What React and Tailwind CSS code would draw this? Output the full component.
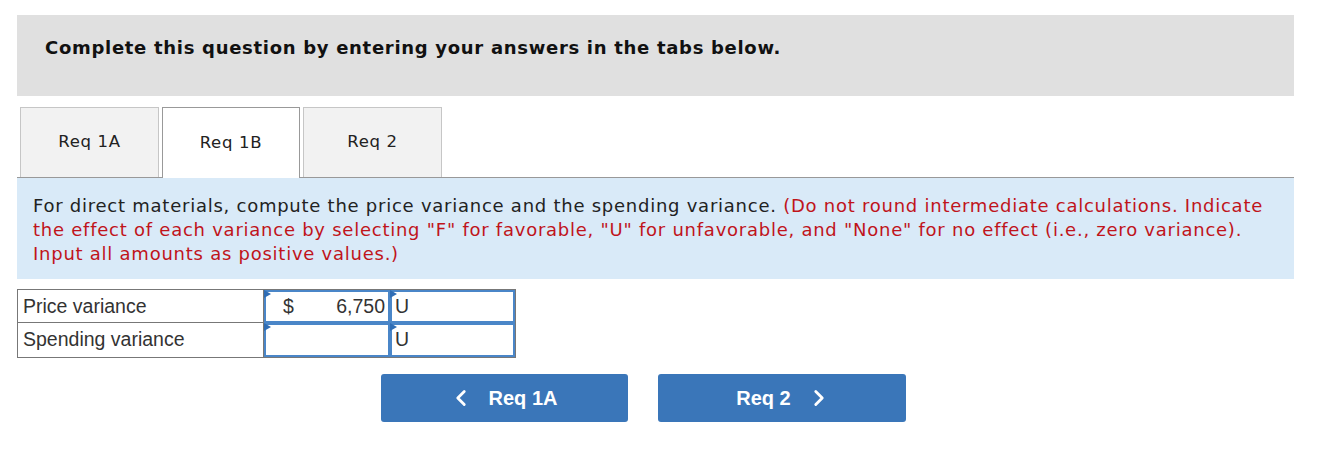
import { ChevronLeft, ChevronRight } from "lucide-react";

const verdana = { fontFamily: '"DejaVu Sans", Verdana, sans-serif' };

function Tab({ label, active }) {
  return active ? (
    <div className="w-[138px] h-[71px] -mb-px bg-white border border-b-0 border-[#999] flex items-center justify-center text-[16.5px] tracking-[0.7px] text-[#222] relative z-10">
      {label}
    </div>
  ) : (
    <div className="w-[139px] h-[70px] bg-[#f2f2f2] border border-b-0 border-[#c6c6c6] flex items-center justify-center text-[16.5px] tracking-[0.7px] text-[#222]">
      {label}
    </div>
  );
}

function Cell({ children, className = "" }) {
  return (
    <div className={"relative h-full border-2 border-[#4a86c8] flex items-center " + className}>
      <span className="absolute -top-[2px] -left-[2px] w-0 h-0 border-l-[7px] border-l-[#2f6db5] border-y-[4px] border-y-transparent" />
      {children}
    </div>
  );
}

export default function App() {
  return (
    <div className="bg-white w-[1318px] h-[458px] pt-[15px] pl-[17px]" style={verdana}>
      <div className="w-[1277px]">
        {/* HEADER */}
        <div className="h-[81px] bg-[#e0e0e0] pl-[28px] pt-[21px]">
          <h2 className="font-bold text-[18px] leading-[24px] text-[#111] tracking-[0.7px]">
            Complete this question by entering your answers in the tabs below.
          </h2>
        </div>

        {/* TABS */}
        <div className="mt-[11px] flex items-end gap-[3px] pl-[3px] border-b border-[#999]">
          <Tab label="Req 1A" />
          <Tab label="Req 1B" active />
          <Tab label="Req 2" />
        </div>

        {/* INSTRUCTIONS */}
        <div className="bg-[#d9eaf8] h-[101px] pl-[16px] pr-[12px] pt-[16px] text-[18px] leading-[24px] tracking-[0.75px] text-[#222]">
          For direct materials, compute the price variance and the spending variance.{" "}
          <span className="text-[#c0141b]">
            (Do not round intermediate calculations. Indicate the effect of each variance by selecting "F" for favorable, "U" for unfavorable, and "None" for no effect (i.e., zero variance). Input all amounts as positive values.)
          </span>
        </div>

        {/* TABLE */}
        <div className="mt-[10px] w-[499px] border border-[#777] text-[19.5px] text-[#333]" style={{ fontFamily: '"Liberation Sans", Arial, sans-serif' }}>
          <div className="grid grid-cols-[246px_126px_125px] h-[33px] border-b border-[#777]">
            <div className="border-r border-[#777] pl-[5px] flex items-center">Price variance</div>
            <Cell className="justify-between pl-[17px] pr-[3px]">
              <span>$</span>
              <span>6,750</span>
            </Cell>
            <Cell className="pl-[3px]">U</Cell>
          </div>
          <div className="grid grid-cols-[246px_126px_125px] h-[34px]">
            <div className="border-r border-[#777] pl-[5px] flex items-center">Spending variance</div>
            <Cell />
            <Cell className="pl-[3px]">U</Cell>
          </div>
        </div>

        {/* NAV */}
        <div className="mt-[16px] ml-[364px] flex gap-[30px]" style={{ fontFamily: '"Liberation Sans", Arial, sans-serif' }}>
          <button className="w-[247px] h-[48px] rounded-[3px] bg-[#3a76b9] text-white font-bold text-[20px] flex items-center justify-center gap-[15px]">
            <ChevronLeft size={26} strokeWidth={2.6} className="-ml-[4px]" />
            <span>Req 1A</span>
          </button>
          <button className="w-[248px] h-[48px] rounded-[3px] bg-[#3a76b9] text-white font-bold text-[20px] flex items-center justify-center gap-[15px]">
            <span>Req 2</span>
            <ChevronRight size={26} strokeWidth={2.6} className="-mr-[4px]" />
          </button>
        </div>
      </div>
    </div>
  );
}
